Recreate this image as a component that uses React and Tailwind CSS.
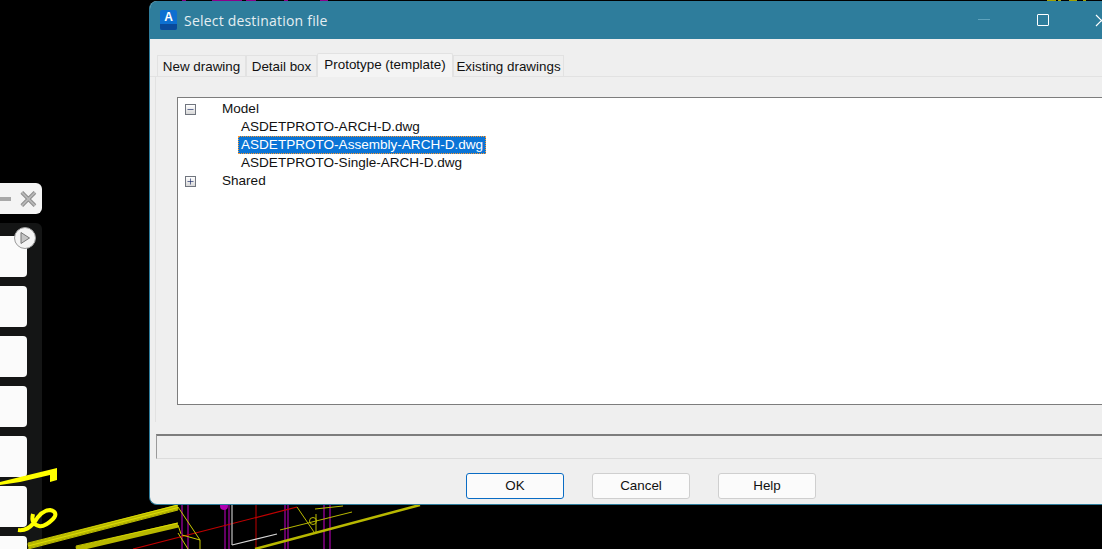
import React from 'react';
import { Minus, Plus } from 'lucide-react';

const tabs = [
  { label: 'New drawing', width: 'w-[89px]' },
  { label: 'Detail box', width: 'w-[71px]' },
  { label: 'Prototype (template)', width: 'w-[136px]', active: true },
  { label: 'Existing drawings', width: 'w-[111px]' },
];

const files = ['ASDETPROTO-ARCH-D.dwg', 'ASDETPROTO-Assembly-ARCH-D.dwg', 'ASDETPROTO-Single-ARCH-D.dwg'];

const CadDrawing = () => (
  <svg className="absolute inset-0" width="1102" height="549" fill="none">
    {/* stray bits above the dialog */}
    <path d="M182 0.5h4M212 0.5h30M246 0.5h10M284 0.5h4M320 0.5h8" stroke="#e800e8" strokeOpacity="0.6" />
    <path d="M1047 0.5h9M1058 0.5h3M1069 0.5h8M1083 0.5h3" stroke="#e8e800" strokeOpacity="0.7" />
    {/* purple columns */}
    <path d="M182 505v44M188 505v44M225 505v44M229 505v44M285 505v44M288 505v44M324 505v44M330 505v44" stroke="#c800c8" />
    <circle cx="224" cy="506" r="4" fill="#b000b0" />
    {/* red lines */}
    <path d="M133 549L297 507" stroke="#c00000" strokeWidth="1.2" />
    <path d="M256 505v44" stroke="#c00000" />
    {/* ucs marker */}
    <path d="M232 505v40" stroke="#9a9a9a" strokeWidth="1.5" />
    <path d="M232 545L277 534" stroke="#d8d8d8" strokeWidth="1.2" />
    {/* yellow steel */}
    <path d="M28 546L178 507" stroke="#b8b800" strokeWidth="5" />
    <path d="M28 543L178 505M28 546L178 507.5M28 549L178 510" stroke="#e8e800" strokeWidth="0.8" />
    <path d="M76 549L178 525" stroke="#b8b800" strokeWidth="5" />
    <path d="M76 546L178 523" stroke="#e8e800" strokeWidth="0.8" />
    <path d="M178 507L200 540V549M178 525L181 534M182 535L200 540M188 549L178 533" stroke="#c8c800" />
    <path d="M297 507L314 532M280 530L352 512M315 509L343 506M316 514V532" stroke="#b8b800" />
    <path d="M255 549L420 505" stroke="#b8b800" strokeWidth="2.5" />
    <circle cx="313" cy="521" r="3.5" stroke="#b8b800" />
    {/* yellow dimension marks over the palette */}
    <path d="M0 482L20 477L57 468V480L50 482V475L20 482L0 485Z" fill="#ffff00" />
    <path d="M18 530C26 531 30 527 34 523C38 516 43 510 50 510C56 511 57 515 53 519C48 524 44 527 39 526C34 525 31 521 33 514" stroke="#ffff00" strokeWidth="4" />
  </svg>
);

const ToolPalette = () => (
  <div className="absolute left-0 top-[183px] w-[42px] h-[366px]">
    <div className="h-[31px] bg-[#f4f4f4] rounded-r-md flex items-center justify-end pr-[4px] gap-[8px]">
      <div className="w-[12px] h-[4px] bg-[#a8a8a8]" />
      <svg width="20" height="20" viewBox="0 0 20 20" fill="none">
        <path d="M3 3L17 17M17 3L3 17" stroke="#8c8c8c" strokeWidth="4" />
        <path d="M3 3L17 17M17 3L3 17" stroke="#b8b8b8" strokeWidth="2" />
      </svg>
    </div>
    <div className="mt-[9px] h-[326px] bg-[#141515] rounded-tr-md pt-[13px] pr-[15px] flex flex-col gap-[9px] overflow-hidden">
      {[0, 1, 2, 3, 4, 5, 6].map((i) => (
        <div key={i} className="h-[41px] shrink-0 bg-[#fbfbfb] rounded-r-[4px]" />
      ))}
    </div>
    <div className="absolute left-[14px] top-[44px] w-[22px] h-[22px] rounded-full bg-[#f4f4f4] border border-[#9a9a9a] flex items-center justify-center">
      <svg width="12" height="14" viewBox="0 0 12 14">
        <path d="M2 1.5L10.5 7L2 12.5Z" fill="#c4c4c4" stroke="#777777" />
      </svg>
    </div>
  </div>
);

const TreeToggle = ({ open }) => (
  <div className="w-[11px] h-[11px] border border-[#70757e] bg-gradient-to-b from-white to-[#d8d8d8] flex items-center justify-center text-[#1c2c68]">
    {open ? <Minus size={9} strokeWidth={1.8} /> : <Plus size={9} strokeWidth={1.8} />}
  </div>
);

const App = () => {
  return (
    <div className="relative w-[1102px] h-[549px] overflow-hidden bg-black font-['Liberation_Sans',Arial,sans-serif]">
      <ToolPalette />
      <CadDrawing />

      {/* dialog window, runs off the right edge */}
      <div className="absolute left-[149px] top-[1px] w-[1000px] h-[504px] bg-[#efefef] rounded-lg overflow-hidden border-l border-b border-[#2e7d9c] flex flex-col">
        <div className="h-[38px] shrink-0 bg-[#2e7d9c] flex items-center pl-[10px] relative">
          <div className="w-[17px] h-[20px] rounded-[2px] bg-[#0d6fd0] flex flex-col items-center overflow-hidden">
            <span className="text-white text-[12px] leading-[14px] font-bold">A</span>
            <div className="w-full flex-1 bg-[#0a4a9a]" />
          </div>
          <span className="ml-[7px] text-[14px] text-[#e4eef2] font-['Open_Sans',sans-serif] tracking-[0.2px]">Select destination file</span>
          <div className="absolute left-[828px] top-[18px] w-[12px] h-px bg-[#5fa3bd]" />
          <div className="absolute left-[887px] top-[13px] w-[12px] h-[12px] border-[1.5px] border-white rounded-[1px]" />
          <svg className="absolute left-[945px] top-[13px]" width="13" height="13" fill="none">
            <path d="M1 1L12 12M12 1L1 12" stroke="white" strokeWidth="1.2" />
          </svg>
        </div>

        <div className="flex items-end h-[38px] shrink-0 pl-[7px] border-b border-[#e2e2e2]">
          {tabs.map((tab) => (
            <div
              key={tab.label}
              className={
                tab.active
                  ? `${tab.width} h-[24px] -mb-px bg-[#f4f4f4] border border-b-0 border-[#e2e2e2] rounded-t-[2px] text-[13.4px] leading-[21px] text-center text-[#111111]`
                  : `${tab.width} h-[21px] bg-[#efefef] border border-b-0 border-[#e2e2e2] text-[13.4px] leading-[22px] text-center text-[#111111]`
              }
            >
              {tab.label}
            </div>
          ))}
        </div>

        {/* tab page */}
        <div className="h-[345px] shrink-0 ml-[5px] border-l border-[#e2e2e2] pl-[21px] pt-[20px]">
          <div className="h-[308px] bg-white border border-[#7d7d7d] pt-[2px] text-[13.55px] text-[#111111] leading-[18px]">
            <div className="h-[18px] flex items-center">
              <div className="ml-[7px] w-[37px]"><TreeToggle open /></div>
              <span>Model</span>
            </div>
            {files.map((file, i) => (
              <div key={file} className="h-[18px] pl-[61px] flex items-center">
                {i === 1 ? (
                  <span className="h-[18px] px-[2px] bg-[#0a74d6] text-white border border-dotted border-[#ff9a2e] leading-[16px] -mx-px">{file}</span>
                ) : (
                  <span className="px-[2px]">{file}</span>
                )}
              </div>
            ))}
            <div className="h-[18px] flex items-center">
              <div className="ml-[7px] w-[37px]"><TreeToggle /></div>
              <span>Shared</span>
            </div>
          </div>
        </div>

        {/* status line */}
        <div className="h-[25px] shrink-0 mt-[12px] ml-[6px] border-t-2 border-l border-b border-t-[#7d7d7d] border-l-[#9a9a9a] border-b-[#dcdcdc]" />

        <div className="flex pl-[316px] pt-[14px] gap-[28px] text-[13.4px] text-[#111111]">
          <button className="w-[98px] h-[26px] pt-[1px] bg-[#fbfbfb] border border-[#0a6cc4] rounded-[3px]">OK</button>
          <button className="w-[98px] h-[26px] pt-[1px] bg-[#fbfbfb] border border-[#cfcfcf] rounded-[3px]">Cancel</button>
          <button className="w-[98px] h-[26px] pt-[1px] bg-[#fbfbfb] border border-[#cfcfcf] rounded-[3px]">Help</button>
        </div>
      </div>
    </div>
  );
};

export default App;
